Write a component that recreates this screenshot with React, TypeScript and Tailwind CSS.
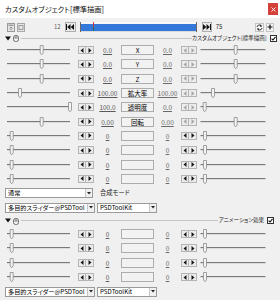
import React from 'react';

const FONT = "font-['Noto_Sans_CJK_JP','Noto_Sans',sans-serif] [font-feature-settings:'palt']";

type RowData = { label: string; lv: string; rv: string; lp: number; rp: number; rGray: boolean };

const rows1: RowData[] = [
  { label: 'X', lv: '0.0', rv: '0.0', lp: 41.7, rp: 241.7, rGray: true },
  { label: 'Y', lv: '0.0', rv: '0.0', lp: 41.7, rp: 241.7, rGray: true },
  { label: 'Z', lv: '0.0', rv: '0.0', lp: 41.7, rp: 241.7, rGray: true },
  { label: '拡大率', lv: '100.00', rv: '100.00', lp: 20, rp: 219, rGray: true },
  { label: '透明度', lv: '100.0', rv: '0.0', lp: 70, rp: 210.7, rGray: true },
  { label: '回転', lv: '0.00', rv: '0.00', lp: 41.7, rp: 241.7, rGray: true },
  { label: '', lv: '0', rv: '0', lp: 11.7, rp: 211, rGray: false },
  { label: '', lv: '0', rv: '0', lp: 11.7, rp: 211, rGray: false },
  { label: '', lv: '0', rv: '0', lp: 11.7, rp: 211, rGray: false },
  { label: '', lv: '0', rv: '0', lp: 11.7, rp: 211, rGray: false },
];

const rows2: RowData[] = [0, 1, 2, 3].map(() => ({ label: '', lv: '0', rv: '0', lp: 11.7, rp: 211, rGray: false }));

function Slider({ width, from, to, pos }: { width: number; from: number; to: number; pos: number }) {
  return (
    <svg width={width} height={14} className="shrink-0 block">
      <line x1={from} x2={to} y1={6.5} y2={6.5} stroke="#7a7a7a" strokeWidth={1} />
      <line x1={from} x2={to} y1={7.5} y2={7.5} stroke="#dcdcdc" strokeWidth={1} />
      <path
        d={`M${pos - 1.5} 2.5 H${pos + 1.5} V10 L${pos} 11.8 L${pos - 1.5} 10 Z`}
        fill="#f3f3f3"
        stroke="#8a8a8a"
        strokeWidth={0.8}
      />
    </svg>
  );
}

function Spin({ gray }: { gray: boolean }) {
  const c = gray ? '#a6a6a6' : '#161616';
  return (
    <div className="flex shrink-0">
      <div className="w-[8px] h-[8px] border border-[#b4b4b4] bg-[#ececec] flex items-center justify-center">
        <svg width="4" height="5" className="block">
          <path d="M3.5 0 V5 L0.5 2.5 Z" fill={c} />
        </svg>
      </div>
      <div className="w-[8px] h-[8px] border border-l-0 border-[#b4b4b4] bg-[#ececec] flex items-center justify-center">
        <svg width="4" height="5" className="block">
          <path d="M0.5 0 V5 L3.5 2.5 Z" fill={c} />
        </svg>
      </div>
    </div>
  );
}

function Row({ r }: { r: RowData }) {
  return (
    <div className="h-[14.3px] flex items-center pl-[5px] shrink-0">
      <Slider width={69} from={2} to={65} pos={r.lp - 5} />
      <div className="ml-[4px]">
        <Spin gray={false} />
      </div>
      <div className="w-[27px] text-center text-[6.5px] leading-[8px] text-[#5a5a5a] underline decoration-[0.5px] underline-offset-1">
        {r.lv}
      </div>
      <div className="w-[33px] h-[10px] border border-[#adadad] bg-[#f2f2f2] flex items-center justify-center text-[6.5px] leading-[8px] text-black">
        {r.label}
      </div>
      <div className="w-[27px] text-center text-[6.5px] leading-[8px] text-[#6a6a6a] underline decoration-[0.5px] underline-offset-1">
        {r.rv}
      </div>
      <Spin gray={r.rGray} />
      <Slider width={73} from={3.5} to={68.5} pos={r.rp - 203} />
    </div>
  );
}

function Dropdown({ w, text }: { w: number; text: string }) {
  return (
    <div style={{ width: w }} className="h-[10px] bg-white border border-[#9a9a9a] flex items-center shrink-0">
      <div className="flex-1 min-w-0 pl-[2px] text-[6.2px] leading-[8px] text-black whitespace-nowrap">{text}</div>
      <div className="w-[7px] h-full border-l border-[#c8c8c8] bg-[#f0f0f0] flex items-center justify-center shrink-0">
        <svg width="4" height="3" className="block">
          <path d="M0 0 H4 L2 2.5 Z" fill="#222" />
        </svg>
      </div>
    </div>
  );
}

function Check() {
  return (
    <div className="w-[7px] h-[7px] border border-[#333] bg-white flex items-center justify-center shrink-0">
      <svg width="5" height="5" className="block">
        <path d="M0.6 2.6 L2 4 L4.5 0.8" stroke="#111" strokeWidth="1.1" fill="none" />
      </svg>
    </div>
  );
}

function HeaderLine({ label, lineEnd }: { label: string; lineEnd: number }) {
  return (
    <div className="flex items-center h-full pl-[5px] pr-[6px]">
      <svg width="6" height="5" className="block shrink-0">
        <path d="M0 0.5 H6 L3 4.5 Z" fill="#111" />
      </svg>
      <svg width="6" height="8" className="block shrink-0 ml-[2px]">
        <rect x="0.5" y="1.5" width="5" height="6" rx="2" fill="none" stroke="#555" strokeWidth="0.8" />
        <line x1="3" y1="1.5" x2="3" y2="4" stroke="#555" strokeWidth="0.8" />
        <line x1="0.5" y1="4" x2="5.5" y2="4" stroke="#555" strokeWidth="0.6" />
      </svg>
      <div style={{ width: lineEnd - 21 }} className="ml-[2px] h-0 border-t border-[#c4c4c4] shrink-0" />
      <div className="flex-1 flex justify-end pr-[3px] text-[5.5px] leading-[7px] text-[#222] whitespace-nowrap">{label}</div>
      <Check />
    </div>
  );
}

export default function App() {
  return (
    <div className={`w-[280px] h-[300px] bg-[#f0f0f0] overflow-hidden flex flex-col ${FONT}`}>
      {/* title bar */}
      <div className="h-[18px] bg-white flex items-center pl-[5px] shrink-0">
        <div className="text-[7.3px] leading-[10px] text-[#111] whitespace-nowrap">カスタムオブジェクト[標準描画]</div>
        <div className="ml-auto mr-[2px] w-[10px] h-[12px] bg-[#d4413b] flex items-center justify-center">
          <svg width="5" height="5" className="block">
            <path d="M0.5 0.5 L4.5 4.5 M4.5 0.5 L0.5 4.5" stroke="#fff" strokeWidth="0.9" />
          </svg>
        </div>
      </div>

      {/* toolbar */}
      <div className="mt-[4px] h-[10px] flex items-center pl-[7px] pr-[6px] shrink-0">
        <svg width="8" height="9" className="block shrink-0">
          <rect x="0.5" y="0.5" width="7" height="8" fill="#e4e4e4" stroke="#9a9a9a" />
          <rect x="1.5" y="1.5" width="5" height="1.5" fill="#a0a0a0" />
          <path d="M4 7.5 V4 M2.5 5.5 L4 4 L5.5 5.5" stroke="#8a8a8a" strokeWidth="0.8" fill="none" />
        </svg>
        <svg width="8" height="9" className="block shrink-0 ml-[2px]">
          <rect x="0.5" y="0.5" width="7" height="8" fill="#e8e8e8" stroke="#a8a8a8" />
          <rect x="2" y="2.5" width="4" height="4" fill="none" stroke="#9a9a9a" />
        </svg>
        <div className="ml-[29px] text-[6px] leading-[8px] text-[#666]">12</div>
        <div className="ml-[4px] w-[11px] h-[10px] border border-[#adadad] bg-[#ececec] flex items-center justify-center shrink-0">
          <svg width="8" height="6" className="block">
            <rect x="0" y="0" width="1" height="6" fill="#111" />
            <path d="M4.5 0 V6 L1.2 3 Z M8 0 V6 L4.7 3 Z" fill="#111" />
          </svg>
        </div>
        <div className="relative ml-[4px] w-[117px] h-[10px] flex flex-col border-x border-[#6a6a6a] shrink-0">
          <div className="h-[2px] bg-[#f8f8f8]" />
          <div className="h-[7px] bg-[#3478da]" />
          <div className="h-[1px] bg-[#dadada]" />
          <div className="absolute left-[12px] top-0 w-[1px] h-[5px] bg-[#e03030]" />
          <div className="absolute left-[12px] top-[5px] w-[1px] h-[4px] bg-[#2e6a3a]" />
        </div>
        <div className="ml-[5px] w-[10px] h-[10px] border border-[#adadad] bg-[#ececec] flex items-center justify-center shrink-0">
          <svg width="8" height="6" className="block">
            <path d="M0 0 V6 L3.3 3 Z M3.5 0 V6 L6.8 3 Z" fill="#111" />
            <rect x="7" y="0" width="1" height="6" fill="#111" />
          </svg>
        </div>
        <div className="ml-[4px] text-[6px] leading-[8px] text-[#222]">75</div>
        <div className="ml-auto w-[9px] h-[9px] border border-[#c4c4c4] bg-[#f4f4f4] flex items-center justify-center shrink-0">
          <svg width="7" height="7" className="block">
            <path d="M1 3 A2.5 2.5 0 0 1 5.5 2 M6 4 A2.5 2.5 0 0 1 1.5 5" stroke="#222" strokeWidth="0.9" fill="none" />
            <path d="M4.3 0.6 L6.2 2.2 L4 2.8 Z M2.7 6.4 L0.8 4.8 L3 4.2 Z" fill="#222" />
          </svg>
        </div>
        <div className="ml-[2px] w-[8px] h-[9px] border border-[#c4c4c4] bg-[#f4f4f4] flex items-center justify-center shrink-0">
          <svg width="6" height="6" className="block">
            <path d="M3 0.5 V5.5 M0.5 3 H5.5" stroke="#111" strokeWidth="1.2" />
          </svg>
        </div>
      </div>

      {/* header 1 */}
      <div className="mt-[1px] h-[10px] shrink-0">
        <HeaderLine label="カスタムオブジェクト[標準描画]" lineEnd={192} />
      </div>

      {rows1.map((r, i) => (
        <Row key={i} r={r} />
      ))}

      {/* 通常 */}
      <div className="h-[15px] flex items-center pl-[5px] shrink-0">
        <Dropdown w={88} text="通常" />
        <div className="ml-[7px] text-[6.3px] leading-[8px] text-[#222]">合成モード</div>
      </div>
      <div className="h-[14px] flex items-center pl-[5px] shrink-0">
        <Dropdown w={90} text="多目的スライダー@PSDTool" />
        <div className="ml-[2px]">
          <Dropdown w={60} text="PSDToolKit" />
        </div>
      </div>

      {/* header 2 */}
      <div className="h-[12px] shrink-0">
        <HeaderLine label="アニメーション効果" lineEnd={218} />
      </div>

      {rows2.map((r, i) => (
        <Row key={i} r={r} />
      ))}

      <div className="h-[15px] flex items-center pl-[5px] shrink-0">
        <Dropdown w={90} text="多目的スライダー@PSDTool" />
        <div className="ml-[2px]">
          <Dropdown w={60} text="PSDToolKit" />
        </div>
      </div>
    </div>
  );
}
